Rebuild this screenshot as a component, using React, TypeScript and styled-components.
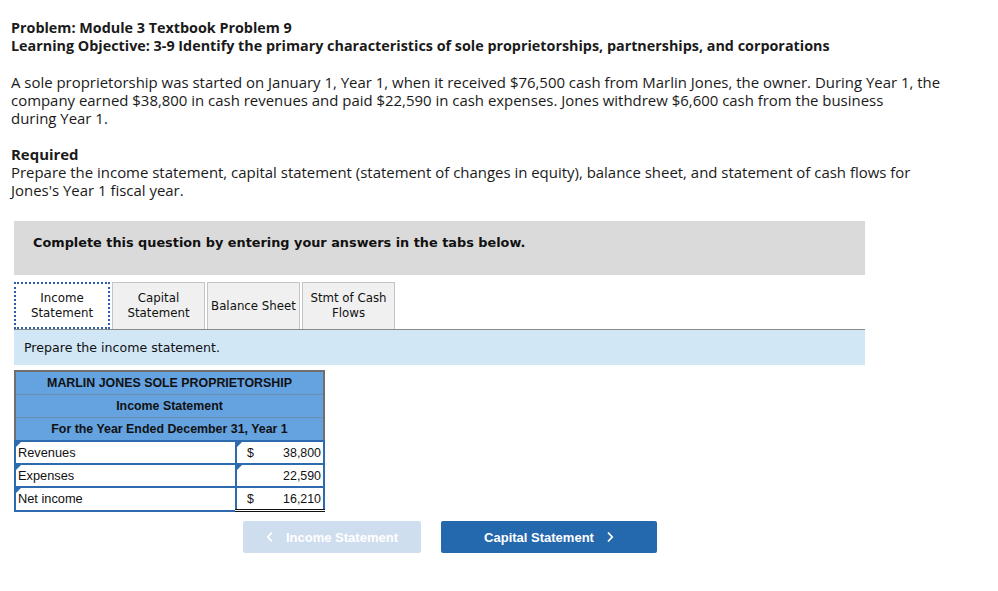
import React from 'react';
import styled, { createGlobalStyle } from 'styled-components';

const GlobalStyle = createGlobalStyle`
  html, body {
    margin: 0;
    padding: 0;
    background: #ffffff;
  }
  body {
    font-family: 'Open Sans', 'Liberation Sans', sans-serif;
    color: #1a1a1a;
  }
`;

const Page = styled.div`
  padding: 19px 0 0 11px;
  width: 970px;
`;

const Heading = styled.div`
  font-size: 14.35px;
  font-weight: 700;
  line-height: 18px;
  white-space: nowrap;
`;

const Paragraph = styled.p`
  margin: 18px 0 0;
  font-size: 14.95px;
  line-height: 18px;
  white-space: nowrap;
`;

const Strong = styled.div`
  font-weight: 700;
`;

const Question = styled.div`
  margin: 22px 0 0 3px;
  width: 851px;
  font-family: 'DejaVu Sans', Verdana, sans-serif;
`;

const Banner = styled.div`
  background: #dadada;
  padding: 14px 0 24px 19px;
  font-size: 12.85px;
  font-weight: 700;
  line-height: 16px;
  color: #111;
`;

const TabBar = styled.div`
  display: flex;
  gap: 2px;
  margin-top: 7px;
  border-bottom: 1px solid #8a8a8a;
`;

const Tab = styled.div<{ $active?: boolean }>`
  box-sizing: border-box;
  width: ${({ $active }) => ($active ? '96px' : '93px')};
  height: 47px;
  display: flex;
  align-items: center;
  justify-content: center;
  text-align: center;
  font-size: 11.8px;
  line-height: 15px;
  color: #111;
  background: ${({ $active }) => ($active ? '#ffffff' : '#f0f0f0')};
  border: ${({ $active }) =>
    $active ? '2px dotted #2a5fa8' : '1px solid #c4c4c4'};
  border-bottom: ${({ $active }) => ($active ? '2px dotted #2a5fa8' : 'none')};
  margin-bottom: ${({ $active }) => ($active ? '-1px' : '0')};
`;

const Instruction = styled.div`
  background: #d2e7f6;
  height: 35px;
  display: flex;
  align-items: center;
  padding-left: 10px;
  font-size: 12.6px;
  color: #111;
`;

const Sheet = styled.table`
  margin-top: 5px;
  width: 311px;
  border-collapse: collapse;
  border: 2px solid #6f6f6f;
  font-family: 'Liberation Sans', Arial, sans-serif;
  font-size: 12.8px;
  color: #111;
`;

const HeadCell = styled.td`
  background: #64a2e0;
  border-bottom: 1px solid #6f8fb0;
  height: 22px;
  padding: 0;
  text-align: center;
  font-weight: 700;
  font-size: 12.4px;
`;

const LabelCell = styled.td`
  position: relative;
  background: #ffffff;
  border: 2px solid #2d6aae;
  height: 21px;
  padding: 0 0 0 2px;
  width: 217px;

  &::before {
    content: '';
    position: absolute;
    top: 0;
    left: 0;
    border-top: 5px solid #2d6aae;
    border-right: 5px solid transparent;
  }
`;

const ValueCell = styled.td<{ $marker?: boolean; $total?: boolean }>`
  position: relative;
  background: #ffffff;
  border: 2px solid #2d6aae;
  border-bottom: ${({ $total }) => ($total ? '3px double #111' : '2px solid #2d6aae')};
  height: 21px;
  padding: 0 2px 0 10px;
  font-size: 12.4px;

  &::before {
    content: '';
    display: ${({ $marker }) => ($marker ? 'block' : 'none')};
    position: absolute;
    top: 0;
    left: 0;
    border-top: 5px solid #2d6aae;
    border-right: 5px solid transparent;
  }
`;

const Amount = styled.div`
  display: flex;
  justify-content: space-between;
`;

const Buttons = styled.div`
  display: flex;
  gap: 20px;
  margin: 9px 0 0 229px;
  font-family: 'Liberation Sans', Arial, sans-serif;
`;

const NavButton = styled.button<{ $primary?: boolean }>`
  height: 32px;
  width: ${({ $primary }) => ($primary ? '216px' : '178px')};
  border: none;
  border-radius: 2px;
  background: ${({ $primary }) => ($primary ? '#2468ad' : '#cfdeee')};
  color: #ffffff;
  font-family: inherit;
  font-size: 13px;
  font-weight: 700;
  display: flex;
  align-items: center;
  justify-content: center;
  gap: 12px;
  padding: 0;
`;

const Chevron = ({ dir }: { dir: 'left' | 'right' }) => (
  <svg width="8" height="12" viewBox="0 0 8 12" fill="none">
    <path
      d={dir === 'left' ? 'M6 1.5L1.8 6 6 10.5' : 'M2 1.5L6.2 6 2 10.5'}
      stroke="#ffffff"
      strokeWidth="1.8"
    />
  </svg>
);

const rows = [
  { label: 'Revenues', dollar: true, value: '38,800', marker: true },
  { label: 'Expenses', dollar: false, value: '22,590', marker: true },
  { label: 'Net income', dollar: true, value: '16,210', marker: false, total: true },
];

export default function App() {
  return (
    <>
      <GlobalStyle />
      <Page>
        <Heading>
          Problem: Module 3 Textbook Problem 9
          <br />
          Learning Objective: 3-9 Identify the primary characteristics of sole proprietorships,
          partnerships, and corporations
        </Heading>
        <Paragraph>
          A sole proprietorship was started on January 1, Year 1, when it received $76,500 cash
          from Marlin Jones, the owner. During Year 1, the
          <br />
          company earned $38,800 in cash revenues and paid $22,590 in cash expenses. Jones
          withdrew $6,600 cash from the business
          <br />
          during Year 1.
        </Paragraph>
        <Paragraph>
          <Strong>Required</Strong>
          Prepare the income statement, capital statement (statement of changes in equity),
          balance sheet, and statement of cash flows for
          <br />
          Jones's Year 1 fiscal year.
        </Paragraph>
        <Question>
          <Banner>Complete this question by entering your answers in the tabs below.</Banner>
          <TabBar>
            <Tab $active>
              Income
              <br />
              Statement
            </Tab>
            <Tab>
              Capital
              <br />
              Statement
            </Tab>
            <Tab>Balance Sheet</Tab>
            <Tab>
              Stmt of Cash
              <br />
              Flows
            </Tab>
          </TabBar>
          <Instruction>Prepare the income statement.</Instruction>
          <Sheet>
            <tbody>
              <tr>
                <HeadCell colSpan={2}>MARLIN JONES SOLE PROPRIETORSHIP</HeadCell>
              </tr>
              <tr>
                <HeadCell colSpan={2}>Income Statement</HeadCell>
              </tr>
              <tr>
                <HeadCell colSpan={2}>For the Year Ended December 31, Year 1</HeadCell>
              </tr>
              {rows.map((row) => (
                <tr key={row.label}>
                  <LabelCell>{row.label}</LabelCell>
                  <ValueCell $marker={row.marker} $total={row.total}>
                    <Amount>
                      <span>{row.dollar ? '$' : ''}</span>
                      <span>{row.value}</span>
                    </Amount>
                  </ValueCell>
                </tr>
              ))}
            </tbody>
          </Sheet>
          <Buttons>
            <NavButton>
              <Chevron dir="left" />
              Income Statement
            </NavButton>
            <NavButton $primary>
              Capital Statement
              <Chevron dir="right" />
            </NavButton>
          </Buttons>
        </Question>
      </Page>
    </>
  );
}
